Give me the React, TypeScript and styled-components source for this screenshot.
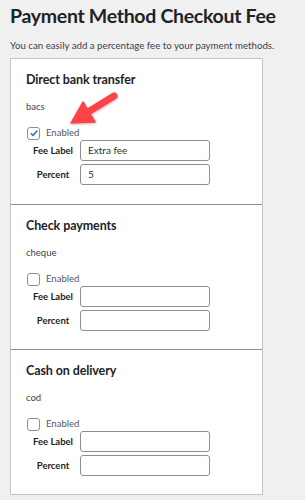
import styled, { createGlobalStyle } from 'styled-components';

interface Method {
  title: string;
  id: string;
  enabled: boolean;
  label: string;
  percent: string;
}

const methods: Method[] = [
  { title: 'Direct bank transfer', id: 'bacs', enabled: true, label: 'Extra fee', percent: '5' },
  { title: 'Check payments', id: 'cheque', enabled: false, label: '', percent: '' },
  { title: 'Cash on delivery', id: 'cod', enabled: false, label: '', percent: '' },
];

const GlobalStyle = createGlobalStyle`
  html, body {
    margin: 0;
    padding: 0;
    background: #f0f0f1;
  }
  body {
    font-family: Lato, "Open Sans", sans-serif;
    color: #3c434a;
  }
`;

const App = () => (
  <>
    <GlobalStyle />
    <Wrap>
      <Title>Payment Method Checkout Fee</Title>
      <Intro>You can easily add a percentage fee to your payment methods.</Intro>
      <Card>
        {methods.map(m => (
          <Section key={m.id}>
            <Heading>{m.title}</Heading>
            <Code>{m.id}</Code>
            <CheckRow>
              <Box $checked={m.enabled}>
                {m.enabled && (
                  <svg width="10" height="10" viewBox="0 0 10 10">
                    <path d="M1.8 5.2 L4 7.4 L8.4 2.4" fill="none" stroke="#2271b1" strokeWidth="1.5" />
                  </svg>
                )}
              </Box>
              <span>Enabled</span>
            </CheckRow>
            <Fields>
              <FieldLabel>Fee Label</FieldLabel>
              <Input>{m.label}</Input>
              <FieldLabel>Percent</FieldLabel>
              <Input>{m.percent}</Input>
            </Fields>
          </Section>
        ))}
        <Arrow width="50" height="36" viewBox="0 0 50 36">
          <defs>
            <filter id="arrowShadow" x="-20%" y="-20%" width="140%" height="140%">
              <feDropShadow dx="0.5" dy="1" stdDeviation="0.8" floodColor="#000" floodOpacity="0.25" />
            </filter>
          </defs>
          <g filter="url(#arrowShadow)" fill="#fe4347" stroke="#fe4347">
            <path d="M45 4 L19 20" strokeWidth="7" strokeLinecap="round" />
            <polygon points="14,10 26,30 2,31" strokeWidth="1.5" strokeLinejoin="round" />
          </g>
        </Arrow>
      </Card>
    </Wrap>
  </>
);

export default App;

const Wrap = styled.div`
  padding: 4px 10px 0 10px;
  width: 253px;
`;

const Title = styled.h1`
  margin: 0;
  font-size: 19.5px;
  font-weight: 700;
  letter-spacing: -0.3px;
  color: #1d2327;
  line-height: 24px;
  white-space: nowrap;
`;

const Intro = styled.p`
  margin: 10px 0 0 0;
  font-size: 9.7px;
  line-height: 14px;
  white-space: nowrap;
`;

const Card = styled.div`
  position: relative;
  margin-top: 6px;
  background: #fff;
  border: 1px solid #c3c4c7;
`;

const Section = styled.div`
  height: 145px;
  box-sizing: border-box;
  padding: 13px 0 0 15px;
  & + & {
    border-top: 1px solid #8c8f94;
  }
`;

const Heading = styled.h2`
  margin: 0;
  font-size: 12.5px;
  font-weight: 700;
  letter-spacing: -0.1px;
  color: #1d2327;
  line-height: 16px;
`;

const Code = styled.div`
  margin-top: 12px;
  font-size: 9.5px;
  line-height: 14px;
`;

const CheckRow = styled.div`
  display: flex;
  align-items: center;
  gap: 6px;
  margin-top: 12px;
  margin-left: 1px;
  font-size: 9.5px;
  line-height: 14px;
  color: #50575e;
`;

const Box = styled.span<{ $checked: boolean }>`
  display: flex;
  align-items: center;
  justify-content: center;
  width: 11px;
  height: 11px;
  border: 1px solid #8c8f94;
  border-radius: 3px;
  background: #fff;
`;

const Fields = styled.div`
  display: grid;
  grid-template-columns: 54px 130px;
  grid-auto-rows: 21px;
  row-gap: 3px;
  align-items: center;
  margin-top: 0;
`;

const FieldLabel = styled.div`
  font-size: 9.5px;
  font-weight: 700;
  color: #1d2327;
  text-align: center;
`;

const Input = styled.div`
  box-sizing: border-box;
  height: 21px;
  border: 1px solid #8c8f94;
  border-radius: 3px;
  padding: 0 7px;
  font-size: 10px;
  line-height: 19px;
  color: #2c3338;
`;

const Arrow = styled.svg`
  position: absolute;
  left: 58px;
  top: 33px;
`;
